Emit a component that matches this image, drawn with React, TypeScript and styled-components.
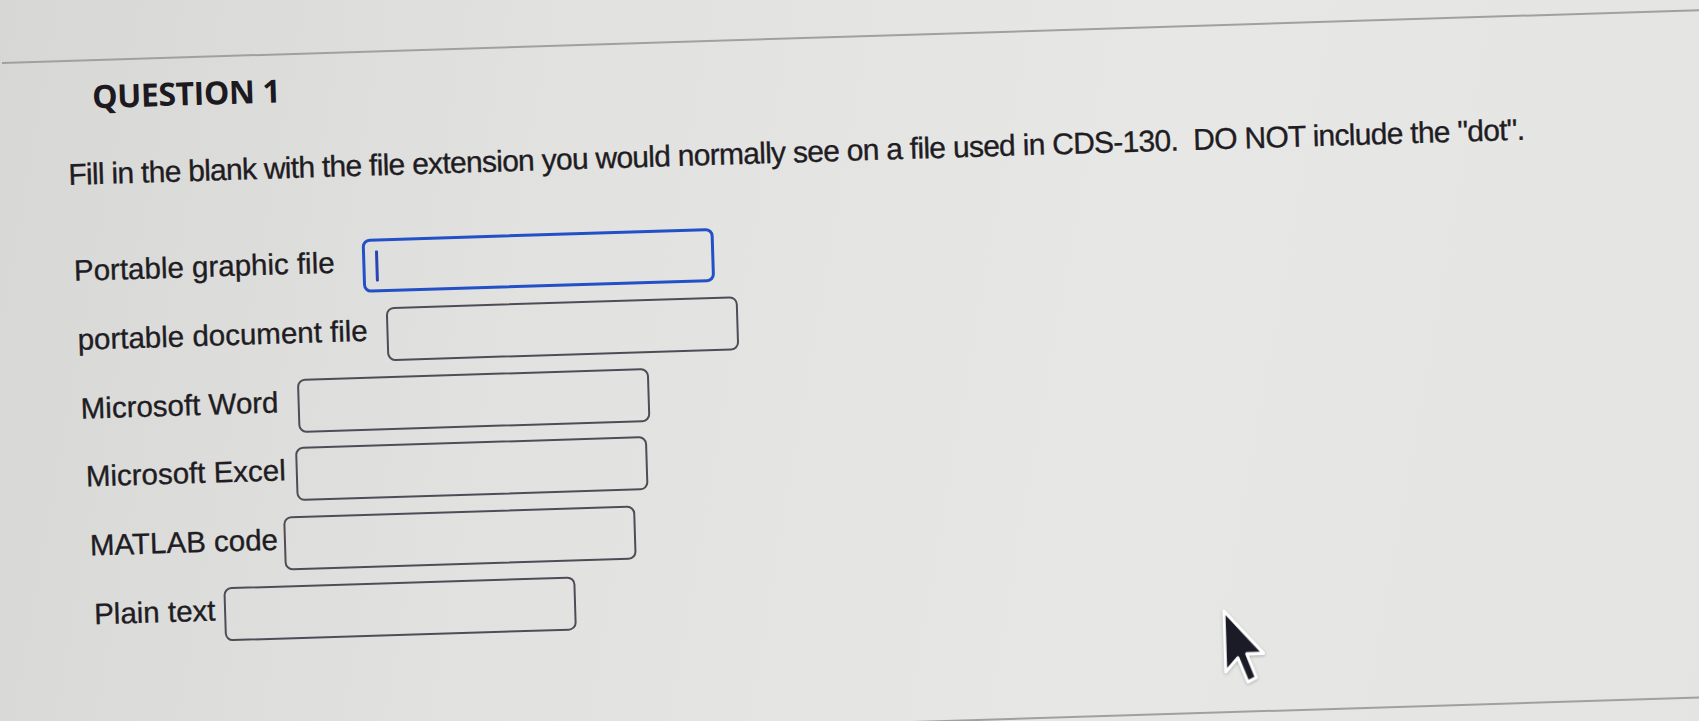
import React from "react";
import styled, { createGlobalStyle } from "styled-components";

const GlobalStyle = createGlobalStyle`
  html, body {
    margin: 0;
    padding: 0;
    width: 1699px;
    height: 721px;
    overflow: hidden;
  }
  body {
    background: linear-gradient(100deg, #d7d8d6 0%, #e1e2e0 30%, #e7e8e6 65%, #e4e4e2 100%);
    color: #1f1c23;
    font-family: "Liberation Sans", Arial, sans-serif;
  }
  #root {
    width: 1699px;
    height: 721px;
    overflow: hidden;
  }
`;

const Page = styled.div`
  position: relative;
  width: 1820px;
  display: flex;
  flex-direction: column;
  transform: rotate(-1.78deg);
  transform-origin: 0 0;
`;

const Rule = styled.hr<{ $top: number }>`
  margin: ${(p) => p.$top}px 0 0;
  border: none;
  border-top: 2px solid #a0a0a0;
  width: 100%;
  height: 0;
`;

const Heading = styled.h1`
  margin: 17px 0 0 89px;
  font-family: "Open Sans", "Liberation Sans", sans-serif;
  font-weight: 700;
  font-size: 32px;
  line-height: 36px;
  letter-spacing: -0.4px;
  color: #1c1a20;
`;

const Instruction = styled.p`
  margin: 42px 0 0 63px;
  font-family: "Liberation Sans", Arial, sans-serif;
  font-size: 30px;
  line-height: 36px;
  letter-spacing: -0.72px;
  white-space: pre;
  color: #1f1c23;
  -webkit-text-stroke: 0.35px #1f1c23;
`;

const Form = styled.div`
  display: flex;
  flex-direction: column;
  gap: 14.8px;
  margin-top: 55px;
`;

const Row = styled.div<{ $indent: number; $gap: number }>`
  display: flex;
  align-items: center;
  padding-left: ${(p) => p.$indent}px;
  gap: ${(p) => p.$gap}px;
`;

const Label = styled.label`
  font-family: "Liberation Sans", Arial, sans-serif;
  font-size: 29.5px;
  line-height: 36px;
  margin-bottom: 8px;
  white-space: nowrap;
  color: #1f1c23;
  -webkit-text-stroke: 0.35px #1f1c23;
`;

const Field = styled.div`
  position: relative;
  width: 352px;
  height: 54px;
`;

const Input = styled.input<{ $focused?: boolean }>`
  box-sizing: border-box;
  width: 100%;
  height: 100%;
  margin: 0;
  padding: 0 12px;
  border-radius: 8px;
  background: transparent;
  outline: none;
  font-family: "Liberation Sans", Arial, sans-serif;
  font-size: 28px;
  border: ${(p) => (p.$focused ? "3px solid #2350c6" : "2px solid #514b57")};
`;

const Caret = styled.span`
  position: absolute;
  left: 13px;
  top: 12px;
  width: 3px;
  height: 31px;
  background: #2b44b3;
  border-radius: 1px;
`;

const Pointer = styled.svg`
  position: absolute;
  left: 1201px;
  top: 645px;
  filter: drop-shadow(0 1px 1.5px rgba(0, 0, 0, 0.25));
`;

const fields = [
  { label: "Portable graphic file", indent: 65.5, gap: 27.4, focused: true },
  { label: "portable document file", indent: 67, gap: 18.5 },
  { label: "Microsoft Word", indent: 68, gap: 19 },
  { label: "Microsoft Excel", indent: 71, gap: 10 },
  { label: "MATLAB code", indent: 73, gap: 6 },
  { label: "Plain text", indent: 75, gap: 9 },
];

export default function App() {
  return (
    <>
      <GlobalStyle />
      <Page>
        <Rule $top={62} />
        <Heading>QUESTION 1</Heading>
        <Instruction>
          {'Fill in the blank with the file extension you would normally see on a file used in CDS-130.  DO NOT include the "dot".'}
        </Instruction>
        <Form>
          {fields.map((f, i) => (
            <Row key={i} $indent={f.indent} $gap={f.gap}>
              <Label htmlFor={`ans-${i}`}>{f.label}</Label>
              <Field>
                <Input id={`ans-${i}`} type="text" readOnly $focused={f.focused} />
                {f.focused && <Caret />}
              </Field>
            </Row>
          ))}
        </Form>
        <Rule $top={101} />
        <Pointer width="43" height="80" viewBox="0 0 13 21" preserveAspectRatio="none">
          <path
            d="M1 1 L1 17 L4.8 13.4 L7.6 19.8 L10.2 18.7 L7.5 12.4 L12.6 12.4 Z"
            fill="#1a1b26"
            stroke="#ffffff"
            strokeWidth="0.9"
            strokeLinejoin="round"
          />
        </Pointer>
      </Page>
    </>
  );
}
